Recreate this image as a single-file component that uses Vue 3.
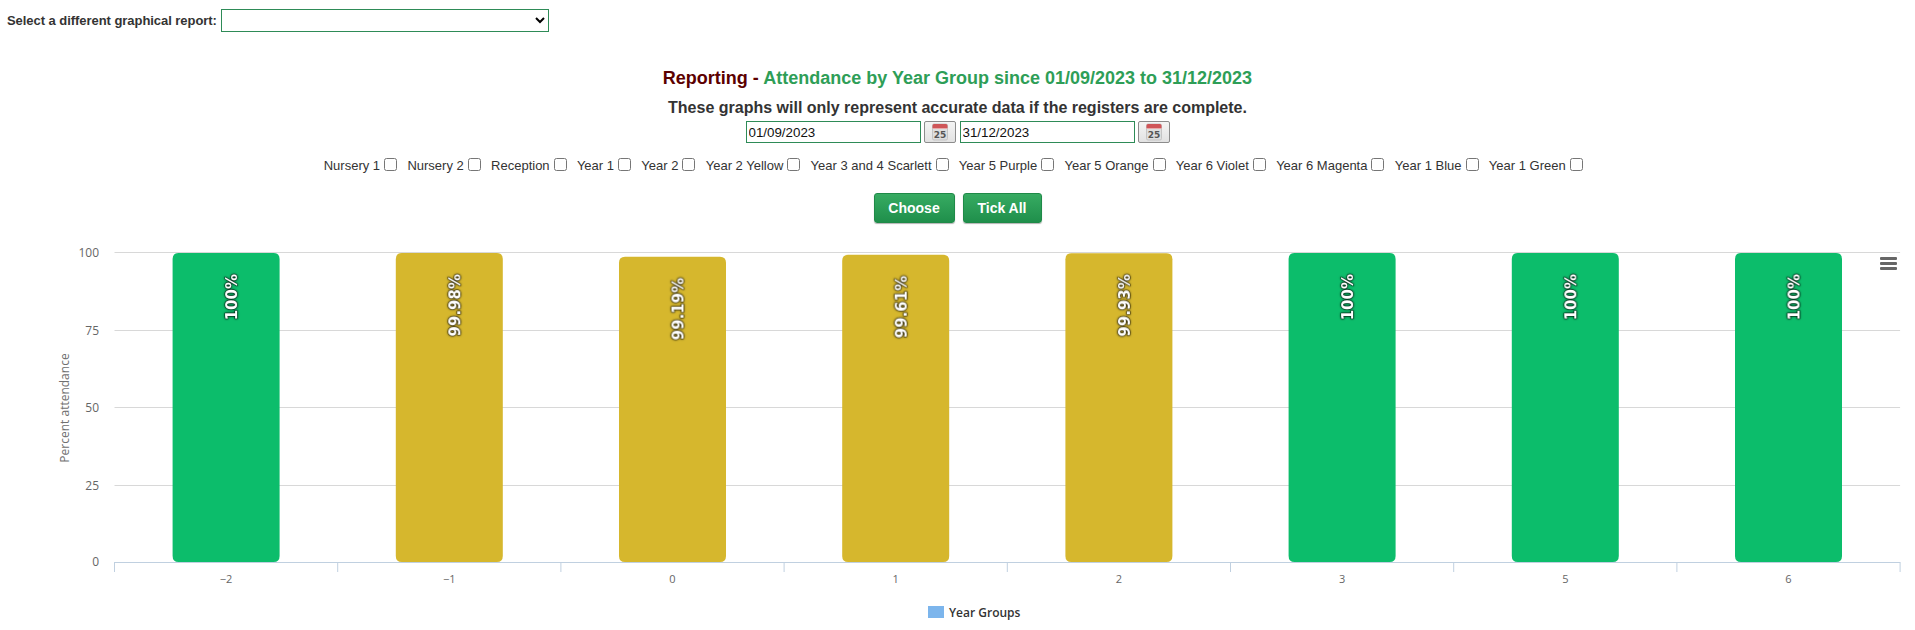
<script setup>
const groups = ['Nursery 1','Nursery 2','Reception','Year 1','Year 2','Year 2 Yellow','Year 3 and 4 Scarlett','Year 5 Purple','Year 5 Orange','Year 6 Violet','Year 6 Magenta','Year 1 Blue','Year 1 Green']
const GREEN = '#0cbd6b'
const GOLD = '#d6b72d'
const left = 114.5
const step = 223.2
const right = left + step * 8
const zero = 561
const top = 252
const bars = [
  { cat: '−2', label: '100%', value: 100, color: GREEN },
  { cat: '−1', label: '99.98%', value: 99.98, color: GOLD },
  { cat: '0', label: '99.19%', value: 98.8, color: GOLD },
  { cat: '1', label: '99.61%', value: 99.45, color: GOLD },
  { cat: '2', label: '99.93%', value: 99.93, color: GOLD },
  { cat: '3', label: '100%', value: 100, color: GREEN },
  { cat: '5', label: '100%', value: 100, color: GREEN },
  { cat: '6', label: '100%', value: 100, color: GREEN },
].map((b, i) => {
  const cx = left + step * (i + 0.5)
  const y = zero - (zero - top) * b.value / 100
  const x = cx - 53.5, w = 107, r = 6
  return {
    ...b, cx, y,
    d: `M${x} ${y + r}Q${x} ${y} ${x + r} ${y}H${x + w - r}Q${x + w} ${y} ${x + w} ${y + r}V${zero - r}Q${x + w} ${zero} ${x + w - r} ${zero}H${x + r}Q${x} ${zero} ${x} ${zero - r}Z`,
  }
})
const gridY = [
  { t: '100', y: 251.5 }, { t: '75', y: 329.5 }, { t: '50', y: 406.5 }, { t: '25', y: 484.5 }, { t: '0', y: 561 },
]
const ticks = Array.from({ length: 9 }, (_, i) => left + step * i)
</script>

<template>
  <div class="page">
    <div class="report-row">
      <label class="report-label">Select a different graphical report:</label>
      <select class="report-select"><option></option></select>
    </div>
    <h2 class="title"><span class="maroon">Reporting - </span><span class="green">Attendance by Year Group since 01/09/2023 to 31/12/2023</span></h2>
    <h3 class="subtitle">These graphs will only represent accurate data if the registers are complete.</h3>
    <div class="dates">
      <template v-for="d in ['01/09/2023','31/12/2023']" :key="d">
        <input class="date" type="text" :value="d" />
        <button class="cal" type="button" aria-label="calendar">
          <svg width="18" height="18" viewBox="0 0 18 18">
            <rect x="1.500" y="1" width="15" height="16" rx="1.500" fill="#dedede" stroke="#c4c4c4" />
            <path d="M1.500 2.500A1.500 1.500 0 0 1 3 1h12a1.500 1.500 0 0 1 1.500 1.500V5h-15z" fill="#cf5558" />
            <path d="M1.500 5h15v1h-15z" fill="#e9a9aa" />
            <text x="9" y="14.800" class="cal-num">25</text>
          </svg>
        </button>
      </template>
    </div>
    <div class="checks">
      <label v-for="g in groups" :key="g" class="check">{{ g }}<input type="checkbox" /></label>
    </div>
    <div class="actions">
      <button class="btn choose" type="button">Choose</button>
      <button class="btn tick" type="button">Tick All</button>
    </div>
    <svg class="chart" width="1915" height="401" viewBox="0 226 1915 401">
      <line v-for="g in gridY.slice(0, 4)" :key="g.t" :x1="left" :x2="right" :y1="g.y" :y2="g.y" class="grid" />
      <text v-for="g in gridY" :key="'l' + g.t" x="99" :y="g.y + 4" class="ylabel">{{ g.t }}</text>
      <text class="ytitle" transform="translate(69 407) rotate(-90)">Percent attendance</text>
      <path v-for="b in bars" :key="b.cat" :d="b.d" :fill="b.color" />
      <line :x1="left" :x2="right" :y1="zero + 0.5" :y2="zero + 0.5" class="axis" />
      <line v-for="t in ticks" :key="t" :x1="t" :x2="t" :y1="zero" :y2="zero + 10" class="axis" />
      <text v-for="b in bars" :key="'x' + b.cat" :x="b.cx" y="582" class="xlabel">{{ b.cat }}</text>
      <text v-for="b in bars" :key="'d' + b.cat" class="dlabel" :transform="`translate(${b.cx + 11} ${b.y + 21}) rotate(-90)`">{{ b.label }}</text>
      <g class="menu">
        <rect x="1880" y="256" width="17" height="3" rx="1" />
        <rect x="1880" y="261" width="17" height="3" rx="1" />
        <rect x="1880" y="266" width="17" height="3" rx="1" />
      </g>
      <rect x="928" y="605" width="16" height="12" fill="#7cb5ec" />
      <text x="949" y="616" class="legend">Year Groups</text>
    </svg>
  </div>
</template>

<style>
html, body { margin: 0; background: #fff; }
</style>

<style scoped>
.page {
  width: 1915px;
  font-family: "Liberation Sans", Arial, sans-serif;
  color: #333;
}
.report-row {
  display: flex;
  align-items: center;
  gap: 4px;
  padding: 9px 0 0 7px;
}
.report-label { font-size: 13px; font-weight: 700; letter-spacing: -0.05px; }
.report-select {
  width: 328px;
  height: 23px;
  box-sizing: border-box;
  border: 1px solid #2e8b57;
  background: #fff;
  border-radius: 0;
}
.title {
  margin: 34px 0 0;
  text-align: center;
  font-size: 18px;
  line-height: 24px;
  font-weight: 700;
}
.maroon { color: #5c0000; }
.green { color: #2e9e57; }
.subtitle {
  margin: 8px 0 0;
  text-align: center;
  font-size: 16px;
  line-height: 20px;
  font-weight: 700;
}
.dates {
  display: flex;
  justify-content: center;
  align-items: flex-start;
  gap: 3px;
  margin-top: 3px;
}
.date {
  width: 175px;
  height: 22px;
  box-sizing: border-box;
  border: 1px solid #2e8b57;
  padding: 0 2px;
  font: 13.333px "Liberation Sans", Arial, sans-serif;
  color: #111;
}
.cal {
  width: 32px;
  height: 22px;
  box-sizing: border-box;
  padding: 0;
  border: 1px solid #8c8c8c;
  border-radius: 2px;
  background: linear-gradient(#f4f4f4, #e2e2e2);
  display: flex;
  align-items: center;
  justify-content: center;
}
.cal + .date { margin-left: 1px; }
.cal-num {
  font: 700 9px "DejaVu Sans", sans-serif;
  fill: #555;
  text-anchor: middle;
}
.checks {
  display: flex;
  justify-content: center;
  gap: 10.3px;
  margin-top: 13px;
  padding-right: 8.6px;
  font-size: 13px;
  line-height: 20px;
  height: 20px;
}
.check { display: flex; align-items: center; }
.check input { margin: 0 0 3px 4px; width: 13px; height: 13px; }
.actions {
  display: flex;
  justify-content: center;
  gap: 8px;
  margin-top: 17px;
}
.btn {
  height: 30px;
  box-sizing: border-box;
  padding: 0;
  border: 1px solid #1f8a48;
  border-radius: 3px;
  background: linear-gradient(#37ab62, #1f8f4b);
  color: #fff;
  font: 700 14px "Liberation Sans", Arial, sans-serif;
  box-shadow: 0 1px 1px rgba(0,0,0,.3);
}
.choose { width: 81px; }
.tick { width: 79px; }
.chart { display: block; margin-top: 4px; }
.grid { stroke: #d8d8d8; stroke-width: 1; }
.axis { stroke: #c0d0e0; stroke-width: 1; }
.ylabel { font: 12px "Open Sans", sans-serif; fill: #666; text-anchor: end; }
.ytitle { font: 12px "Open Sans", sans-serif; fill: #707070; text-anchor: middle; }
.xlabel { font: 11px "Open Sans", sans-serif; fill: #666; text-anchor: middle; }
.dlabel {
  font: 700 15px "DejaVu Sans", sans-serif;
  fill: #fff;
  text-anchor: end;
  stroke: rgba(0,0,0,.45);
  stroke-width: 1.5px;
  paint-order: stroke;
  stroke-linejoin: round;
  filter: drop-shadow(0 0 1px rgba(0,0,0,.75));
}
.menu rect { fill: #666; }
.legend { font: 600 12px "Open Sans", sans-serif; fill: #333; }
</style>
